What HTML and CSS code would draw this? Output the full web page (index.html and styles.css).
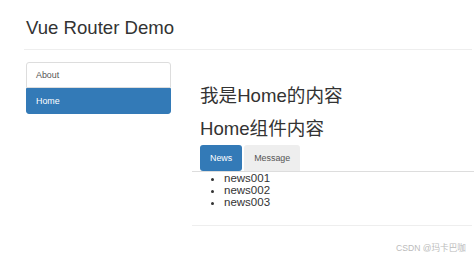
FILE: index.html
```html
<!DOCTYPE html>
<html lang="zh-CN">
<head>
<meta charset="utf-8">
<title>Vue Router Demo</title>
<link rel="stylesheet" href="styles.css">
</head>
<body>
<div class="page">
  <header class="page-header">
    <h1 class="title">Vue Router Demo</h1>
  </header>
  <div class="main">
    <nav class="side">
      <a class="side-item">About</a>
      <a class="side-item active">Home</a>
    </nav>
    <section class="content">
      <div class="inner">
        <h2 class="heading">我是Home的内容</h2>
        <h2 class="heading">Home组件内容</h2>
      </div>
      <ul class="tabs">
        <li class="tab active">News</li>
        <li class="tab">Message</li>
      </ul>
      <ul class="news">
        <li>news001</li>
        <li>news002</li>
        <li>news003</li>
      </ul>
      <div class="rule"></div>
    </section>
  </div>
</div>
<div class="watermark">CSDN @玛卡巴咖</div>
</body>
</html>
```

FILE: styles.css
```css
html, body {
  margin: 0;
  padding: 0;
  background: #fff;
}
body {
  font-family: "Liberation Sans", Arial, "Noto Sans CJK SC", sans-serif;
  color: #333;
  width: 474px;
  height: 257px;
  overflow: hidden;
  position: relative;
}
.page {
  padding: 0 0 0 24px;
}
.page-header {
  margin-right: 2px;
  padding: 17px 0 10px 2px;
  border-bottom: 1px solid #eee;
}
.title {
  margin: 0;
  font-size: 18.6px;
  line-height: 22px;
  font-weight: normal;
  color: #333;
}
.main {
  display: flex;
  margin-top: 12px;
}
.side {
  margin-left: 2px;
  width: 145px;
  display: flex;
  flex-direction: column;
}
.side-item {
  display: block;
  height: 26px;
  box-sizing: border-box;
  line-height: 24px;
  padding-left: 9px;
  font-size: 8.9px;
  color: #555;
  border: 1px solid #ddd;
  background: #fff;
}
.side-item:first-child {
  border-radius: 3px 3px 0 0;
}
.side-item.active {
  background: #337ab7;
  border-color: #337ab7;
  color: #fff;
  border-radius: 0 0 3px 3px;
}
.content {
  flex: 1;
  margin-left: 21px;
  padding-top: 17px;
}
.inner {
  padding-left: 8px;
}
.heading {
  margin: 0;
  font-size: 18.6px;
  line-height: 33px;
  font-weight: normal;
  color: #333;
  font-family: "Liberation Sans", Arial, "Noto Sans CJK SC", sans-serif;
}
.tabs {
  list-style: none;
  margin: 0;
  padding: 0 0 0 8px;
  display: flex;
  gap: 2px;
  border-bottom: 1px solid #ddd;
}
.tab {
  height: 26px;
  line-height: 26px;
  padding: 0 10px;
  font-size: 8.9px;
  color: #555;
  background: #eee;
  border-radius: 3px 3px 0 0;
}
.tab.active {
  background: #337ab7;
  color: #fff;
  border-radius: 3px;
}
.news {
  margin: 0;
  padding: 0 0 0 32px;
  font-size: 11.5px;
  line-height: 12px;
  color: #333;
}
.rule {
  margin: 17px 2px 0 0;
  border-top: 1px solid #eee;
}
.watermark {
  position: absolute;
  left: 396px;
  top: 242px;
  font-size: 8.6px;
  line-height: 12px;
  color: #bbb;
  font-family: "Liberation Sans", Arial, "Noto Sans CJK SC", sans-serif;
}
```
